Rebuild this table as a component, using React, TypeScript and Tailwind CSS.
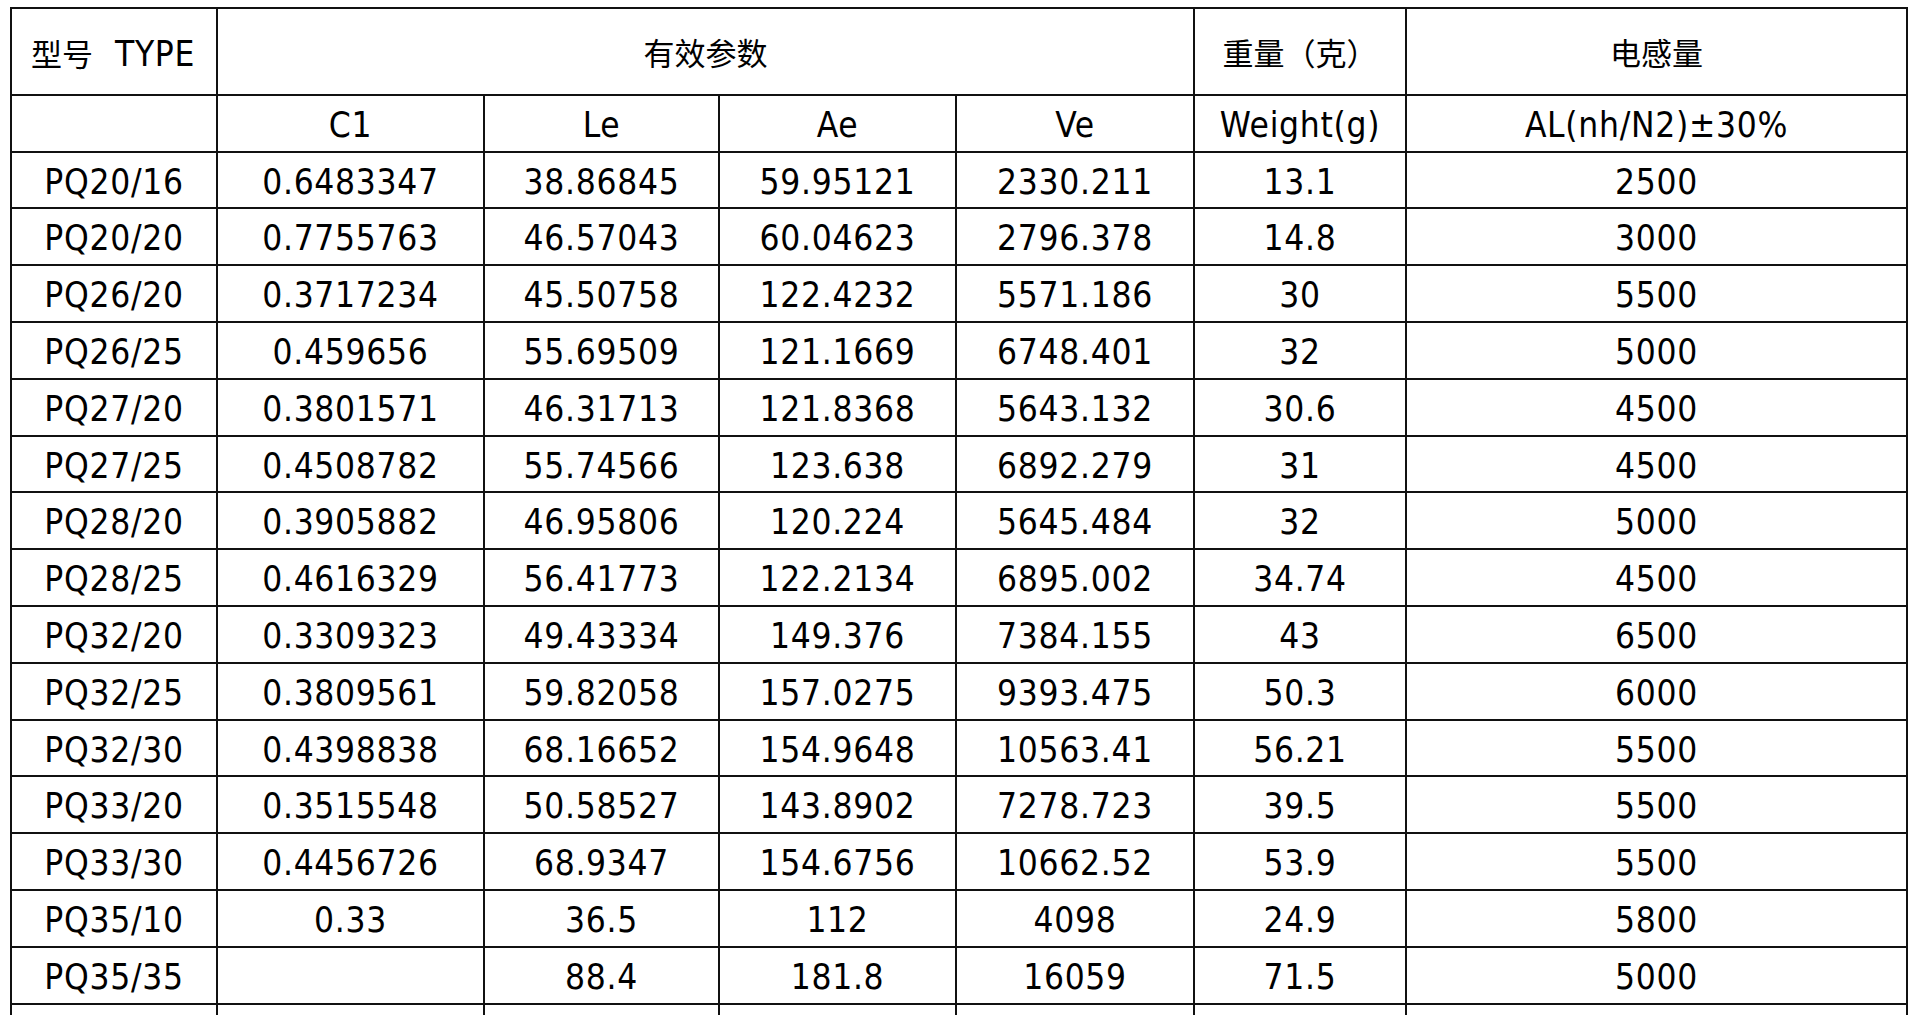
import React from "react";

const rows: string[][] = [
  ["PQ20/16", "0.6483347", "38.86845", "59.95121", "2330.211", "13.1", "2500"],
  ["PQ20/20", "0.7755763", "46.57043", "60.04623", "2796.378", "14.8", "3000"],
  ["PQ26/20", "0.3717234", "45.50758", "122.4232", "5571.186", "30", "5500"],
  ["PQ26/25", "0.459656", "55.69509", "121.1669", "6748.401", "32", "5000"],
  ["PQ27/20", "0.3801571", "46.31713", "121.8368", "5643.132", "30.6", "4500"],
  ["PQ27/25", "0.4508782", "55.74566", "123.638", "6892.279", "31", "4500"],
  ["PQ28/20", "0.3905882", "46.95806", "120.224", "5645.484", "32", "5000"],
  ["PQ28/25", "0.4616329", "56.41773", "122.2134", "6895.002", "34.74", "4500"],
  ["PQ32/20", "0.3309323", "49.43334", "149.376", "7384.155", "43", "6500"],
  ["PQ32/25", "0.3809561", "59.82058", "157.0275", "9393.475", "50.3", "6000"],
  ["PQ32/30", "0.4398838", "68.16652", "154.9648", "10563.41", "56.21", "5500"],
  ["PQ33/20", "0.3515548", "50.58527", "143.8902", "7278.723", "39.5", "5500"],
  ["PQ33/30", "0.4456726", "68.9347", "154.6756", "10662.52", "53.9", "5500"],
  ["PQ35/10", "0.33", "36.5", "112", "4098", "24.9", "5800"],
  ["PQ35/35", "", "88.4", "181.8", "16059", "71.5", "5000"],
  ["", "", "", "", "", "", ""],
];

const cell = "border-r-2 border-b-2 border-[#111] p-0 text-center align-middle whitespace-nowrap";
const cjk = "font-['Noto_Sans_CJK_SC',sans-serif] text-[31px] tracking-normal";

export default function App() {
  return (
    <div className="h-screen w-full overflow-hidden bg-white pl-[10px] pt-[7px] text-black font-['DejaVu_Sans_Condensed','DejaVu_Sans',sans-serif] text-[35px] tracking-[0.7px] leading-none">
      <table className="table-fixed border-separate border-spacing-0 border-l-2 border-t-2 border-[#111] w-[1898px]">
        <colgroup>
          <col className="w-[206px]" />
          <col className="w-[267px]" />
          <col className="w-[235px]" />
          <col className="w-[237px]" />
          <col className="w-[238px]" />
          <col className="w-[212px]" />
          <col className="w-[501px]" />
        </colgroup>
        <thead>
          <tr className="h-[87px]">
            <th className={`${cell} font-normal !text-left pl-[19px] pt-[5px]`}>
              <span className={cjk}>型号</span>
              <span className="ml-[22px]">TYPE</span>
            </th>
            <th colSpan={4} className={`${cell} font-normal pt-[4px]`}>
              <span className={cjk}>有效参数</span>
            </th>
            <th className={`${cell} font-normal pt-[4px]`}>
              <span className={cjk}>重量（克）</span>
            </th>
            <th className={`${cell} font-normal pt-[4px]`}>
              <span className={cjk}>电感量</span>
            </th>
          </tr>
          <tr className="h-[57px]">
            <th className={`${cell} font-normal pt-[3px]`}></th>
            <th className={`${cell} font-normal pt-[3px]`}>C1</th>
            <th className={`${cell} font-normal pt-[3px]`}>Le</th>
            <th className={`${cell} font-normal pt-[3px]`}>Ae</th>
            <th className={`${cell} font-normal pt-[3px]`}>Ve</th>
            <th className={`${cell} font-normal pt-[3px]`}>Weight(g)</th>
            <th className={`${cell} font-normal pt-[3px]`}>AL(nh/N2)±30%</th>
          </tr>
        </thead>
        <tbody>
          {rows.map((r, i) => (
            <tr key={i} className={i % 5 === 0 ? "h-[56px]" : "h-[57px]"}>
              {r.map((v, j) => (
                <td key={j} className={`${cell} pt-[4px]`}>
                  {v}
                </td>
              ))}
            </tr>
          ))}
        </tbody>
      </table>
    </div>
  );
}
